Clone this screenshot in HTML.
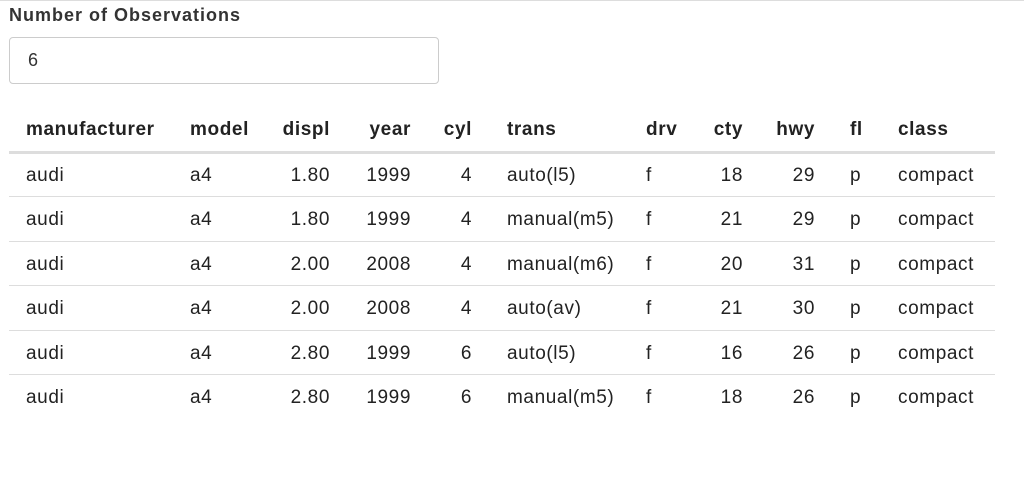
<!DOCTYPE html>
<html><head><meta charset="utf-8"><style>
body{margin:0;width:1024px;height:479px;background:#fff;font-family:"Liberation Sans",Helvetica,Arial,sans-serif;color:#222;position:relative;overflow:hidden}
.top{position:absolute;left:0;top:0;width:1024px;height:1px;background:#ddd}
.lbl{position:absolute;left:9px;top:5px;font-size:18px;font-weight:bold;color:#333;letter-spacing:1px}
.inp{position:absolute;left:9px;top:37px;width:430px;height:47px;border:1px solid #ccc;border-radius:4px;box-sizing:border-box;font-size:18px;line-height:45px;padding-left:18px;color:#333}
.c{position:absolute;font-size:19px;line-height:20px;white-space:nowrap;letter-spacing:0.6px}
.h{font-weight:bold}
.r{text-align:right}
.ln{position:absolute;left:9px;width:986px;height:1px;background:#ddd}
</style></head><body>
<div class="top"></div>
<div class="lbl">Number of Observations</div>
<div class="inp">6</div>
<div class="ln" style="top:151px;height:3px"></div>
<div class="ln" style="top:196px"></div>
<div class="ln" style="top:241px"></div>
<div class="ln" style="top:285px"></div>
<div class="ln" style="top:330px"></div>
<div class="ln" style="top:374px"></div>
<div id="t"></div>
<script>
var cols=[[26,'l'],[190,'l'],[330,'r'],[411,'r'],[472,'r'],[507,'l'],[646,'l'],[743,'r'],[815,'r'],[850,'l'],[898,'l']];
var rows=[["manufacturer","model","displ","year","cyl","trans","drv","cty","hwy","fl","class"],
["audi","a4","1.80","1999","4","auto(l5)","f","18","29","p","compact"],
["audi","a4","1.80","1999","4","manual(m5)","f","21","29","p","compact"],
["audi","a4","2.00","2008","4","manual(m6)","f","20","31","p","compact"],
["audi","a4","2.00","2008","4","auto(av)","f","21","30","p","compact"],
["audi","a4","2.80","1999","6","auto(l5)","f","16","26","p","compact"],
["audi","a4","2.80","1999","6","manual(m5)","f","18","26","p","compact"]];
var ys=[120,166,210,255,299,344,388];var h='';
rows.forEach(function(r,i){r.forEach(function(v,j){var c=cols[j];var cls='c'+(i==0?' h':'');
if(c[1]=='r')h+='<div class="'+cls+' r" style="top:'+ys[i]+'px;right:'+(1024-c[0])+'px">'+v+'</div>';
else h+='<div class="'+cls+'" style="top:'+ys[i]+'px;left:'+c[0]+'px">'+v+'</div>';});});
document.getElementById('t').innerHTML=h;
</script>
</body></html>
